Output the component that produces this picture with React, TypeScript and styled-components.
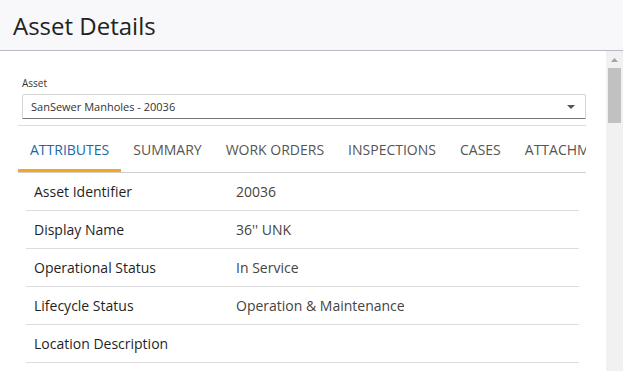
import React from "react";
import styled, { createGlobalStyle } from "styled-components";

const GlobalStyle = createGlobalStyle`
    html, body {
        margin: 0;
        padding: 0;
        background: #ffffff;
        font-family: "Open Sans", "Liberation Sans", sans-serif;
        overflow: hidden;
    }
`;

const attributes = [
    { label: "Asset Identifier", value: "20036" },
    { label: "Display Name", value: "36'' UNK" },
    { label: "Operational Status", value: "In Service" },
    { label: "Lifecycle Status", value: "Operation & Maintenance" },
    { label: "Location Description", value: "" },
    { label: "Asset Type", value: "Manhole" },
];

const tabs = ["ATTRIBUTES", "SUMMARY", "WORK ORDERS", "INSPECTIONS", "CASES", "ATTACHMENTS"];

const App = () => {
    return (
        <Page>
            <GlobalStyle />
            <Header>
                <Title>Asset Details</Title>
            </Header>
            <Body>
                <Content>
                    <FieldLabel>Asset</FieldLabel>
                    <Select>
                        <span>SanSewer Manholes - 20036</span>
                        <Caret />
                    </Select>
                    <TabBar>
                        {tabs.map((t, i) => (
                            <Tab key={t} active={i === 0}>{t}</Tab>
                        ))}
                    </TabBar>
                    <Table>
                        {attributes.map((a) => (
                            <Row key={a.label}>
                                <Label>{a.label}</Label>
                                <Value>{a.value}</Value>
                            </Row>
                        ))}
                    </Table>
                </Content>
                <Scrollbar>
                    <ArrowUp>
                        <svg width="7" height="4" viewBox="0 0 7 4">
                            <polygon points="0,4 7,4 3.5,0" fill="#a3a3a3" />
                        </svg>
                    </ArrowUp>
                    <Thumb />
                </Scrollbar>
            </Body>
        </Page>
    );
};

export default App;

const Page = styled.div`
    width: 623px;
    height: 371px;
    display: flex;
    flex-direction: column;
    overflow: hidden;
`;

const Header = styled.div`
    height: 50px;
    flex-shrink: 0;
    display: flex;
    align-items: center;
    padding-left: 13px;
    background: #f8f8fa;
    border-bottom: 1px solid #b9b9c2;
`;

const Title = styled.h1`
    margin: 0;
    font-size: 24px;
    font-weight: 400;
    color: #222;
`;

const Body = styled.div`
    flex: 1;
    display: flex;
    min-height: 0;
`;

const Content = styled.div`
    flex: 1;
    padding: 25px 20px 0 22px;
    overflow: hidden;
`;

const FieldLabel = styled.div`
    font-size: 10px;
    line-height: 14px;
    color: #333;
    margin-bottom: 4px;
`;

const Select = styled.div`
    height: 23px;
    display: flex;
    align-items: center;
    justify-content: space-between;
    padding: 0 10px 0 8px;
    border: 1px solid #d4d4d4;
    border-bottom: 1px solid #757575;
    border-radius: 2px 2px 0 0;
    font-size: 11px;
    color: #333;
`;

const Caret = styled.div`
    width: 0;
    height: 0;
    border-left: 4px solid transparent;
    border-right: 4px solid transparent;
    border-top: 4px solid #555;
`;

const TabBar = styled.div`
    margin: 6px 0 0 -4px;
    height: 46px;
    display: flex;
    border-top: 1px solid #dcdcdc;
    border-bottom: 1px solid #cfcfcf;
    overflow: hidden;
    white-space: nowrap;
`;

const Tab = styled.div<{ active?: boolean }>`
    padding: 3px 12px 0;
    display: flex;
    align-items: center;
    font-size: 14px;
    color: ${(p) => (p.active ? "#1b68a6" : "#555")};
    border-bottom: 3px solid ${(p) => (p.active ? "#f5a623" : "transparent")};
`;

const Table = styled.div`
    margin: 0 7px 0 4px;
`;

const Row = styled.div`
    height: 37px;
    display: flex;
    align-items: center;
    border-bottom: 1px solid #dcdcdc;
    font-size: 14px;
`;

const Label = styled.div`
    width: 202px;
    padding-left: 8px;
    color: #1f1f1f;
`;

const Value = styled.div`
    color: #444;
`;

const Scrollbar = styled.div`
    width: 17px;
    flex-shrink: 0;
    background: #f1f1f1;
    display: flex;
    flex-direction: column;
    align-items: center;
`;

const ArrowUp = styled.div`
    height: 17px;
    display: flex;
    align-items: center;
    justify-content: center;
`;

const Thumb = styled.div`
    width: 13px;
    height: 55px;
    background: #c1c1c1;
`;
